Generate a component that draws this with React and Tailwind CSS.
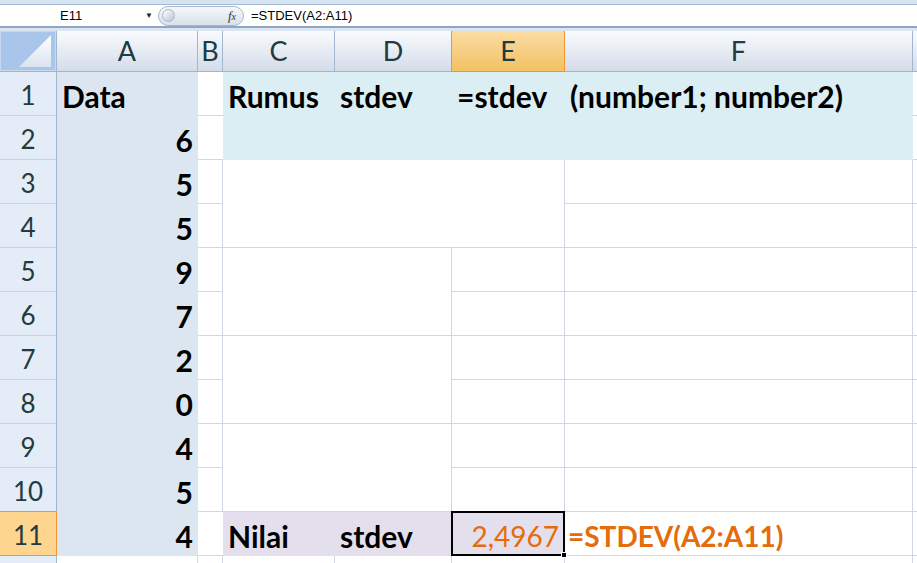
const cellFont = { fontFamily: 'Lato, "Open Sans", sans-serif' }

const GRID = 'border-[#d0d7e5]'

function Cell({ col, row, cs = 1, rs = 1, fill, r = true, b = true, align = 'left', className = '', children }) {
  return (
    <div
      style={{ gridColumn: `${col} / span ${cs}`, gridRow: `${row} / span ${rs}`, ...cellFont }}
      className={`flex items-end pb-[5px] px-[5px] font-bold text-black leading-none overflow-visible whitespace-nowrap ${fill ?? 'bg-white'} ${r ? `border-r ${GRID}` : ''} ${b ? `border-b ${GRID}` : ''} ${align === 'right' ? 'justify-end' : ''} ${className || 'text-[30px]'}`}
    >
      {children}
    </div>
  )
}

function ColHead({ col, label, active }) {
  return (
    <div
      style={{ gridColumn: `${col} / span 1`, gridRow: '1 / span 1', fontFamily: 'Lato, sans-serif' }}
      className={`flex items-center justify-center text-[27px] text-[#213b3e] border-b border-r ${
        active
          ? 'bg-gradient-to-b from-[#fbdca3] to-[#f2c162] border-[#f29536] border-l -ml-px'
          : 'bg-gradient-to-b from-[#f9fbfd] to-[#d4dce9] border-[#9fb6d0]'
      }`}
    >
      {label}
    </div>
  )
}

function RowHead({ row, label, active }) {
  return (
    <div
      style={{ gridColumn: '1 / span 1', gridRow: `${row} / span 1`, fontFamily: 'Lato, sans-serif' }}
      className={`flex items-center justify-center pt-[4px] text-[26px] text-[#213b3e] border-r ${
        active
          ? 'bg-[#fdd58e] border-[#f29536] border-t border-b -mt-px'
          : 'bg-[#e4ecf7] border-[#9fb6d0] border-b-[#c5d3e5] border-b'
      }`}
    >
      {label}
    </div>
  )
}

const values = [6, 5, 5, 9, 7, 2, 0, 4, 5, 4]

export default function App() {
  return (
    <div className="w-[917px] h-[563px] overflow-hidden bg-white flex flex-col">
      {/* formula bar */}
      <div className="h-[31px] shrink-0 bg-[#dbe5f1] flex flex-col">
        <div className="h-[5px] bg-[#d6e3f1] border-b border-[#a3b9d5]" />
        <div className="h-[23px] bg-white border-b-2 border-[#8fa6c4] border-double flex items-center" style={{ fontFamily: '"Liberation Sans", Arial, sans-serif' }}>
          <div className="w-[158px] h-full flex items-center relative">
            <span className="absolute left-[60px] text-[13px] text-black">E11</span>
            <span className="absolute left-[145px] text-[8px] text-[#222]">▼</span>
          </div>
          <div className="w-[86px] h-[20px] rounded-full bg-gradient-to-b from-[#f5f7fb] to-[#d9e1ec] border border-[#a7b7cc] flex items-center justify-between px-[3px]">
            <span className="w-[13px] h-[13px] rounded-full bg-gradient-to-br from-[#ffffff] to-[#b9c6d6] border border-[#aab7c8]" />
            <span className="text-[13px] italic text-[#333] pr-[4px]" style={{ fontFamily: '"Liberation Serif", serif' }}>
              f<span className="text-[10px]">x</span>
            </span>
          </div>
          <span className="ml-[7px] text-[13px] text-black">=STDEV(A2:A11)</span>
        </div>
      </div>

      {/* sheet */}
      <div
        className="grid flex-1"
        style={{
          gridTemplateColumns: '57px 141px 25px 112px 117px 113px 348px 1fr',
          gridTemplateRows: '41px repeat(11, 44px) 1fr',
        }}
      >
        {/* select all corner */}
        <div style={{ gridColumn: '1 / span 1', gridRow: '1 / span 1' }} className="bg-[#a9c5ea] border-r border-b border-[#9fb6d0] relative">
          <svg className="absolute inset-0" width="56" height="40" viewBox="0 0 56 40">
            <rect x="0.5" y="0.5" width="55" height="39" fill="none" stroke="#c8d9f0" />
            <defs>
              <linearGradient id="tri" x1="0" y1="0" x2="0" y2="1">
                <stop offset="0" stopColor="#ffffff" />
                <stop offset="1" stopColor="#d9e3ef" />
              </linearGradient>
            </defs>
            <polygon points="51,4 51,36 19,36" fill="url(#tri)" />
          </svg>
        </div>

        <ColHead col={2} label="A" />
        <ColHead col={3} label="B" />
        <ColHead col={4} label="C" />
        <ColHead col={5} label="D" />
        <ColHead col={6} label="E" active />
        <ColHead col={7} label="F" />
        <div style={{ gridColumn: '8 / span 1', gridRow: '1 / span 1' }} className="bg-gradient-to-b from-[#f9fbfd] to-[#d4dce9] border-b border-[#9fb6d0]" />

        {Array.from({ length: 11 }, (_, i) => (
          <RowHead key={i} row={i + 2} label={i + 1} active={i === 10} />
        ))}
        <div style={{ gridColumn: '1 / span 1', gridRow: '13 / span 1' }} className="bg-[#e4ecf7] border-r border-[#9fb6d0]" />

        {/* column A */}
        <Cell col={2} row={2} fill="bg-[#dce6f1]" r={false} b={false}>Data</Cell>
        {values.map((v, i) => (
          <Cell key={i} col={2} row={i + 3} fill="bg-[#dce6f1]" r={false} b={false} align="right">
            {v}
          </Cell>
        ))}

        {/* column B */}
        {Array.from({ length: 11 }, (_, i) => (
          <Cell key={i} col={3} row={i + 2} r={![0, 1, 10].includes(i)} />
        ))}

        {/* header block C1:F2 */}
        <Cell col={4} row={2} fill="bg-[#daeef3]" r={false} b={false}>Rumus</Cell>
        <Cell col={5} row={2} fill="bg-[#daeef3]" r={false} b={false}>stdev</Cell>
        <Cell col={6} row={2} fill="bg-[#daeef3]" r={false} b={false}>=stdev</Cell>
        <Cell col={7} row={2} fill="bg-[#daeef3]" r={false} b={false}>(number1; number2)</Cell>
        <Cell col={4} row={3} cs={4} fill="bg-[#daeef3]" r={false} b={false} />

        {/* rows 3-10 */}
        <Cell col={4} row={4} cs={3} rs={2} />
        <Cell col={7} row={4} />
        <Cell col={7} row={5} />
        {[6, 8, 10].map((r) => (
          <Cell key={r} col={4} row={r} cs={2} rs={2} />
        ))}
        {[6, 7, 8, 9, 10, 11].map((r) => (
          <Cell key={`e${r}`} col={6} row={r} />
        ))}
        {[6, 7, 8, 9, 10, 11].map((r) => (
          <Cell key={`f${r}`} col={7} row={r} />
        ))}

        {/* row 11 */}
        <Cell col={4} row={12} fill="bg-[#e4dfec]" r={false} b={false}>Nilai</Cell>
        <Cell col={5} row={12} fill="bg-[#e4dfec]" r={false} b={false}>stdev</Cell>
        <div style={{ gridColumn: '6 / span 1', gridRow: '12 / span 1', ...cellFont }} className="relative bg-[#e4dfec] border-2 border-black -ml-px -mt-px flex items-end justify-end pb-[4px] pr-[4px] text-[28px] text-[#e46c0a] leading-none">
          2,4967
          <span className="absolute -right-[4px] -bottom-[4px] w-[6px] h-[6px] bg-black border border-white" />
        </div>
        <Cell col={7} row={12} className="text-[28px] !px-[3px] !text-[#e46c0a]">=STDEV(A2:A11)</Cell>

        {/* column G sliver */}
        {Array.from({ length: 11 }, (_, i) => (
          <Cell key={`g${i}`} col={8} row={i + 2} r={false} />
        ))}

        {/* row 12 partial */}
        <div style={{ gridColumn: '2 / span 1', gridRow: '13 / span 1' }} className="bg-white border-r border-[#d0d7e5]" />
        {[3, 4, 5, 6, 7].map((c) => (
          <div key={c} style={{ gridColumn: `${c} / span 1`, gridRow: '13 / span 1' }} className="bg-white border-r border-[#d0d7e5]" />
        ))}
      </div>
    </div>
  )
}
